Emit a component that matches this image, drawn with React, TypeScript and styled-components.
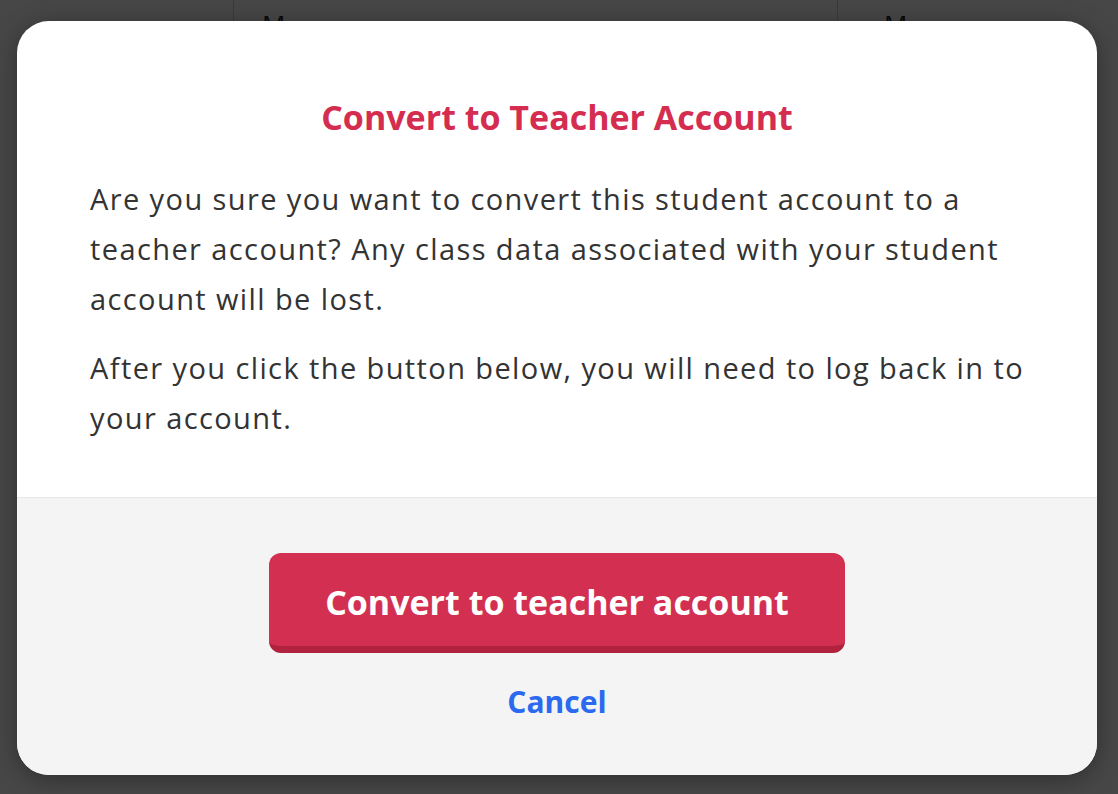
import React from "react";
import styled, { createGlobalStyle } from "styled-components";

const Global = createGlobalStyle`
  html, body { margin: 0; padding: 0; }
  body { width: 1118px; height: 794px; overflow: hidden; background: #fff; font-family: "Open Sans", "Noto Sans", sans-serif; }
`;

const Page = styled.div`
  position: relative;
  width: 1118px;
  height: 794px;
  overflow: hidden;
`;

const Table = styled.div`
  display: grid;
  grid-template-columns: 233px 604px 19px 1fr;
  height: 100px;
`;

const Cell = styled.div<{ $border?: boolean }>`
  border-left: ${(p) => (p.$border ? "1px solid #cfcfcf" : "none")};
  padding: 6px 0 0 28px;
  font-size: 26px;
  color: #222;
`;

const Overlay = styled.div`
  position: absolute;
  inset: 0;
  background: rgba(0, 0, 0, 0.72);
  display: flex;
  align-items: flex-start;
  justify-content: flex-start;
  padding: 21px 0 0 17px;
`;

const Modal = styled.div`
  width: 1080px;
  height: 754px;
  border-radius: 32px;
  overflow: hidden;
  background: #fff;
  display: flex;
  flex-direction: column;
  box-shadow: 0 4px 24px rgba(0, 0, 0, 0.35);
`;

const Body = styled.div`
  padding: 74px 73px 0 73px;
  height: 477px;
  box-sizing: border-box;
  border-bottom: 1px solid #e6e6e6;
`;

const Title = styled.h2`
  margin: 0 0 35px;
  text-align: center;
  color: #d42d50;
  font-size: 34px;
  font-weight: 700;
  line-height: 44px;
`;

const Para = styled.p`
  margin: 0 0 19px;
  color: #333;
  font-size: 29px;
  letter-spacing: 1.4px;
  line-height: 50px;
  white-space: nowrap;
`;

const Footer = styled.div`
  flex: 1;
  background: #f4f4f4;
  display: flex;
  flex-direction: column;
  align-items: center;
  padding-top: 55px;
`;

const PrimaryButton = styled.button`
  width: 576px;
  height: 100px;
  box-sizing: border-box;
  border: none;
  border-bottom: 7px solid #b0223e;
  border-radius: 12px;
  background: #d33051;
  color: #fff;
  font-family: "Open Sans", "Noto Sans", sans-serif;
  font-size: 34px;
  font-weight: 700;
  padding: 4px 0 0;
  cursor: pointer;
`;

const CancelLink = styled.a`
  margin-top: 29px;
  color: #2a69f0;
  font-size: 30px;
  font-weight: 700;
  line-height: 40px;
  text-decoration: none;
  cursor: pointer;
`;

export default function App() {
  return (
    <Page>
      <Global />
      <Table>
        <Cell />
        <Cell $border>M</Cell>
        <Cell $border />
        <Cell>M</Cell>
      </Table>
      <Overlay>
        <Modal>
          <Body>
            <Title>Convert to Teacher Account</Title>
            <Para>
              Are you sure you want to convert this student account to a
              <br />
              teacher account? Any class data associated with your student
              <br />
              account will be lost.
            </Para>
            <Para>
              After you click the button below, you will need to log back in to
              <br />
              your account.
            </Para>
          </Body>
          <Footer>
            <PrimaryButton>Convert to teacher account</PrimaryButton>
            <CancelLink>Cancel</CancelLink>
          </Footer>
        </Modal>
      </Overlay>
    </Page>
  );
}
